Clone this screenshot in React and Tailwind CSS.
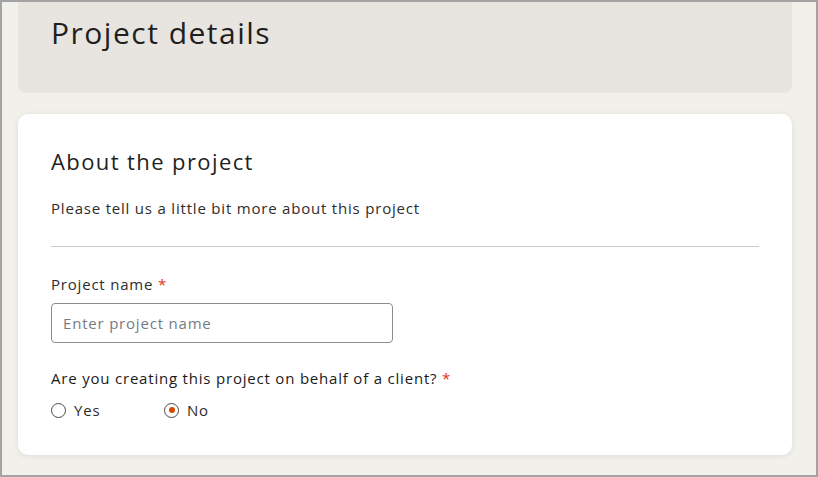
export default function App() {
  return (
    <div
      className="w-[818px] h-[477px] border-2 border-[#a3a3a3] bg-[#f2f0eb] overflow-hidden flex flex-col pl-[16px] pr-[24px] tracking-[0.8px]"
      style={{ fontFamily: "'Open Sans', 'Noto Sans', sans-serif" }}
    >
      <div className="h-[91px] shrink-0 bg-[#e8e5e0] rounded-b-[8px] pl-[33px] pt-[12px]">
        <h1 className="text-[30px] leading-[38px] text-[#1f1f1f] font-normal tracking-[1.5px]">Project details</h1>
      </div>
      <div className="mt-[21px] h-[341px] shrink-0 bg-white rounded-[10px] shadow-[0_1px_6px_rgba(0,0,0,0.08)] px-[33px] pt-[33px]">
        <h2 className="text-[22px] leading-[28px] text-[#1f1f1f] font-normal tracking-[1.4px]">About the project</h2>
        <p className="mt-[23px] text-[15px] leading-[20px] text-[#2d2d2d]">Please tell us a little bit more about this project</p>
        <div className="mt-[28px] h-px bg-[#cccccc]" />
        <label className="block mt-[27px] text-[15px] leading-[20px] text-[#2d2d2d]">
          Project name <span className="text-[#e0301e]">*</span>
        </label>
        <input
          className="mt-[9px] block w-[342px] h-[40px] border border-[#8c8c8c] rounded-[4px] px-[11px] text-[15px] tracking-[0.8px] text-[#2d2d2d] placeholder:text-[#757b85] outline-none"
          placeholder="Enter project name"
        />
        <div className="mt-[25px] text-[15px] leading-[20px] text-[#1a1a1a] font-medium">
          Are you creating this project on behalf of a client? <span className="text-[#e0301e] font-normal">*</span>
        </div>
        <div className="mt-[12px] flex items-center text-[15px] leading-[20px] text-[#2d2d2d]">
          <div className="flex items-center w-[113px]">
            <span className="w-[15px] h-[15px] rounded-full border border-[#4a4a4a] bg-white" />
            <span className="ml-[8px]">Yes</span>
          </div>
          <div className="flex items-center">
            <span className="w-[15px] h-[15px] rounded-full border border-[#4a4a4a] bg-white flex items-center justify-center">
              <span className="w-[6px] h-[6px] rounded-full bg-[#d04a02]" />
            </span>
            <span className="ml-[8px]">No</span>
          </div>
        </div>
      </div>
    </div>
  );
}
